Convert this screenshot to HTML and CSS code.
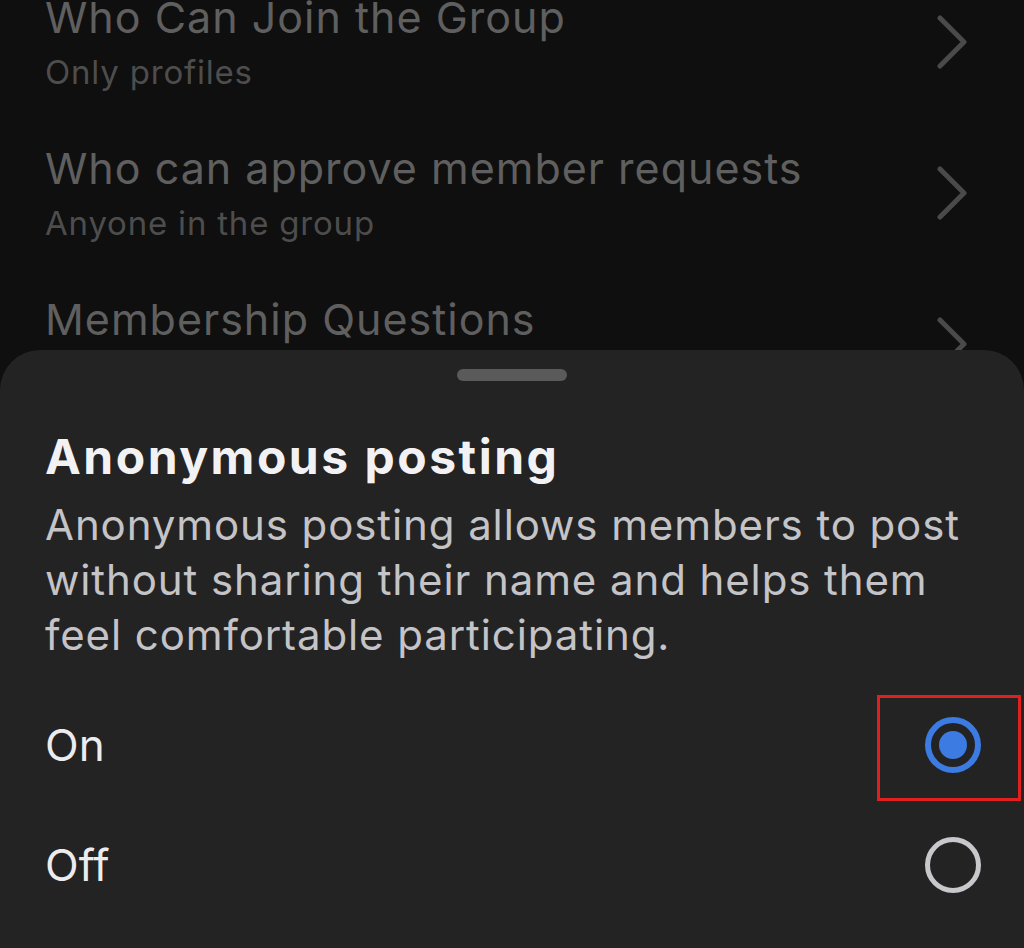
FILE: index.html
```html
<!DOCTYPE html>
<html lang="en">
<head>
  <meta charset="UTF-8">
  <title>Group settings - Anonymous posting</title>
  <link rel="stylesheet" href="styles.css">
</head>
<body>
  <div id="screen">
    <div id="settings-list">
      <div class="setting-row">
        <div class="setting-text">
          <div class="setting-title">Who Can Join the Group</div>
          <div class="setting-sub">Only profiles</div>
        </div>
        <svg class="chevron" viewBox="0 0 30 54" width="30" height="54"><path d="M3 3 L27 27 L3 51"/></svg>
      </div>
      <div class="setting-row">
        <div class="setting-text">
          <div class="setting-title">Who can approve member requests</div>
          <div class="setting-sub">Anyone in the group</div>
        </div>
        <svg class="chevron" viewBox="0 0 30 54" width="30" height="54"><path d="M3 3 L27 27 L3 51"/></svg>
      </div>
      <div class="setting-row">
        <div class="setting-text">
          <div class="setting-title">Membership Questions</div>
        </div>
        <svg class="chevron" viewBox="0 0 30 54" width="30" height="54"><path d="M3 3 L27 27 L3 51"/></svg>
      </div>
    </div>

    <div id="sheet">
      <div class="handle"></div>
      <h2 class="sheet-title">Anonymous posting</h2>
      <p class="sheet-desc">Anonymous posting allows members to post without sharing their name and helps them feel comfortable participating.</p>

      <div class="options">
        <div class="option">
          <span class="option-label">On</span>
          <span class="radio checked"></span>
          <span class="highlight"></span>
        </div>
        <div class="option">
          <span class="option-label">Off</span>
          <span class="radio"></span>
        </div>
      </div>
    </div>
  </div>
</body>
</html>
```

FILE: styles.css
```css
html, body {
  margin: 0;
  padding: 0;
  background-color: #0f0f0f;
  font-family: Inter, "Liberation Sans", sans-serif;
  height: 100%;
  overflow: hidden;
}

#screen {
  display: flex;
  flex-direction: column;
  height: 100%;
}

#settings-list {
  height: 350px;
  overflow: hidden;
  flex-shrink: 0;
}

#settings-list .setting-row:first-child {
  margin-top: -34px;
}

.setting-row {
  display: flex;
  align-items: center;
  height: 151px;
  padding: 0 57px 0 45px;
  box-sizing: border-box;
}

.setting-text {
  flex: 1;
  display: flex;
  flex-direction: column;
  min-height: 99px;
}

.setting-title {
  font-size: 43px;
  line-height: 50px;
  letter-spacing: 1px;
  color: #5f5f5f;
}

.setting-sub {
  font-size: 33px;
  line-height: 38px;
  letter-spacing: 0.8px;
  margin-top: 11px;
  color: #4d4d4d;
}

.chevron {
  fill: none;
  stroke: #4a4a4a;
  stroke-width: 5;
  stroke-linecap: round;
  stroke-linejoin: round;
}

#sheet {
  flex: 1;
  background-color: #232323;
  border-radius: 40px 40px 0 0;
  padding: 0 0 0 45px;
  display: flex;
  flex-direction: column;
}

.handle {
  width: 110px;
  height: 12px;
  border-radius: 6px;
  background-color: #5a5a5a;
  margin: 19px 0 0 412px;
}

.sheet-title {
  margin: 48px 0 0;
  font-size: 48px;
  line-height: 56px;
  letter-spacing: 2.5px;
  font-weight: 700;
  color: #f2f2f4;
}

.sheet-desc {
  margin: 12px 40px 0 0;
  font-size: 42px;
  line-height: 55px;
  letter-spacing: 0.9px;
  color: #c4c4c8;
}

.options {
  margin-top: 23px;
}

.option {
  position: relative;
  display: flex;
  align-items: center;
  justify-content: space-between;
  height: 120px;
  padding-right: 43px;
}

.option-label {
  font-size: 44px;
  color: #ececee;
}

.radio {
  width: 56px;
  height: 56px;
  box-sizing: border-box;
  border-radius: 50%;
  border: 5px solid #c8c8cc;
  display: flex;
  align-items: center;
  justify-content: center;
}

.radio.checked {
  border: 6px solid #3b7be2;
}

.radio.checked::after {
  content: "";
  width: 28px;
  height: 28px;
  border-radius: 50%;
  background-color: #3b7be2;
}

/* annotation box drawn round the selected radio */
.highlight {
  position: absolute;
  top: 10px;
  right: 3px;
  width: 144px;
  height: 106px;
  box-sizing: border-box;
  border: 3px solid #e0201e;
}
```
